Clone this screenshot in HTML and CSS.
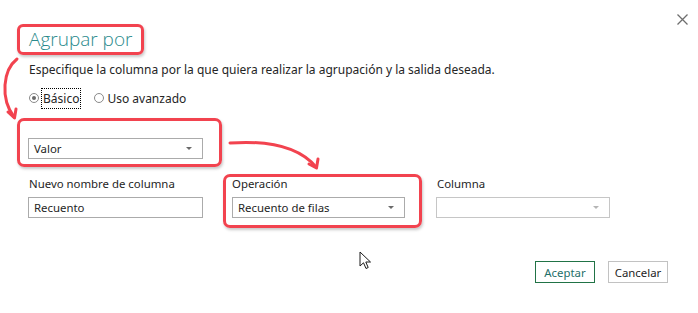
FILE: index.html
```html
<!DOCTYPE html>
<html lang="es">
<head>
<meta charset="utf-8">
<title>Agrupar por</title>
<link rel="stylesheet" href="styles.css">
</head>
<body>
<div class="dialog">
  <button class="close" aria-label="Cerrar">
    <svg width="11" height="11" viewBox="0 0 11 11"><path d="M0.5 0.5 L10.5 10.5 M10.5 0.5 L0.5 10.5" stroke="#6e6e6e" stroke-width="1.3" fill="none"/></svg>
  </button>

  <div class="title-box"><h1 class="title">Agrupar por</h1></div>

  <p class="desc">Especifique la columna por la que quiera realizar la agrupación y la salida deseada.</p>

  <div class="radios">
    <label class="radio"><span class="dot checked"></span><span class="focus">Básico</span></label>
    <label class="radio"><span class="dot"></span><span>Uso avanzado</span></label>
  </div>

  <div class="key-box">
    <div class="select"><span>Valor</span><span class="caret"></span></div>
  </div>

  <div class="fields">
    <div class="field plain">
      <div class="label">Nuevo nombre de columna</div>
      <div class="input">Recuento</div>
    </div>
    <div class="field boxed">
      <div class="label">Operación</div>
      <div class="select"><span>Recuento de filas</span><span class="caret"></span></div>
    </div>
    <div class="field plain">
      <div class="label">Columna</div>
      <div class="select disabled"><span></span><span class="caret"></span></div>
    </div>
  </div>

  <div class="actions">
    <button class="btn primary">Aceptar</button>
    <button class="btn">Cancelar</button>
  </div>

  <svg class="arrows" width="698" height="313" viewBox="0 0 698 313">
    <g fill="none" stroke="#f2434f" stroke-width="3" stroke-linecap="round" stroke-linejoin="round">
      <path d="M17 59 C3 70 0 98 14 117"/>
      <path d="M8 112 L14.5 118 L16 109"/>
      <path d="M230 143 C272 140 300 148 316 167"/>
      <path d="M309 164 L316.5 168 L318 159"/>
    </g>
  </svg>

  <svg class="cursor" width="14" height="20" viewBox="0 0 14 20">
    <path d="M1 1 L1 15 L4.5 11.8 L7 17.5 L9.2 16.5 L6.8 11 L11.5 11 Z" fill="#fff" stroke="#1a1a1a" stroke-width="1" stroke-linejoin="miter"/>
  </svg>
</div>
</body>
</html>
```

FILE: styles.css
```css
* { box-sizing: border-box; }
html, body { margin: 0; padding: 0; background: #fff; }
body {
  font-family: "Noto Sans", "Open Sans", "Liberation Sans", sans-serif;
  font-size: 12px;
  color: #252525;
}
.dialog {
  position: relative;
  width: 698px;
  height: 313px;
  padding-top: 24px;
  overflow: hidden;
}
.close {
  position: absolute;
  left: 677px;
  top: 14px;
  width: 11px;
  height: 11px;
  padding: 0;
  border: 0;
  background: none;
  display: block;
}
.close svg { display: block; }

.title-box {
  margin-left: 17px;
  width: 127px;
  height: 31px;
  border: 3px solid #f2434f;
  border-radius: 6px;
  box-shadow: 1px 2px 3px rgba(0,0,0,0.22);
  padding-left: 9px;
}
.title {
  margin: 0;
  font-family: "Open Sans", "Noto Sans", sans-serif;
  font-weight: 300;
  font-size: 19px;
  line-height: 25px;
  color: #2a8a8c;
  white-space: nowrap;
}
.desc {
  margin: 7px 0 0 29px;
  line-height: 16px;
  white-space: nowrap;
}
.radios {
  margin: 11px 0 0 29px;
  display: flex;
  gap: 14px;
  height: 18px;
  align-items: center;
}
.radio {
  display: flex;
  align-items: center;
  gap: 3px;
}
.dot {
  width: 10px;
  height: 10px;
  border: 1px solid #8a8a8a;
  border-radius: 50%;
  position: relative;
  background: #fff;
}
.dot.checked::after {
  content: "";
  position: absolute;
  left: 2px; top: 2px;
  width: 4px; height: 4px;
  border-radius: 50%;
  background: #6a6a6a;
}
.focus {
  outline: 1px dotted #000;
  outline-offset: 0;
  padding: 1px 1px;
}

.key-box {
  margin: 11px 0 0 17px;
  width: 205px;
  height: 49px;
  border: 3px solid #f2434f;
  border-radius: 7px;
  box-shadow: 1px 2px 3px rgba(0,0,0,0.22);
  padding: 17px 0 0 8px;
}
.select, .input {
  width: 175px;
  height: 21px;
  border: 1px solid #ababab;
  background: #fff;
  display: flex;
  align-items: center;
  justify-content: space-between;
  padding: 0 10px 0 5px;
  line-height: 19px;
  font-size: 11.4px;
}
.caret {
  width: 0; height: 0;
  border-left: 3px solid transparent;
  border-right: 3px solid transparent;
  border-top: 3px solid #6a6a6a;
}
.select.disabled { border-color: #c6c6c6; }
.select.disabled .caret { border-top-color: #b5b5b5; }

.fields {
  margin: 7px 0 0 28px;
  display: grid;
  grid-template-columns: 175px 199px 173px;
  column-gap: 20px;
  align-items: start;
}
.fields > .field:nth-child(3) { margin-left: -6px; }
.field.plain { padding-top: 3px; }
.field.plain .label { padding-left: 1px; }
.label {
  line-height: 14px;
  height: 14px;
  margin-bottom: 6px;
  white-space: nowrap;
  font-size: 11.4px;
}
.field.boxed {
  height: 54px;
  border: 3px solid #f2434f;
  border-radius: 7px;
  box-shadow: 1px 2px 3px rgba(0,0,0,0.22);
  padding: 0 0 0 6px;
}
.field.boxed .select { width: 173px; }
.fields > .field:nth-child(3) .select { width: 174px; }

.actions {
  margin: 33px 30px 0 0;
  display: flex;
  justify-content: flex-end;
  gap: 13px;
}
.btn {
  width: 60px;
  height: 22px;
  padding: 0;
  border: 1px solid #c2c2c2;
  background: #fff;
  font-family: inherit;
  font-size: 11.4px;
  color: #252525;
}
.btn.primary {
  border-color: #217346;
  color: #1f6f6a;
}

.arrows {
  position: absolute;
  left: 0; top: 0;
  pointer-events: none;
}
.cursor {
  position: absolute;
  left: 359px;
  top: 251px;
}
```
